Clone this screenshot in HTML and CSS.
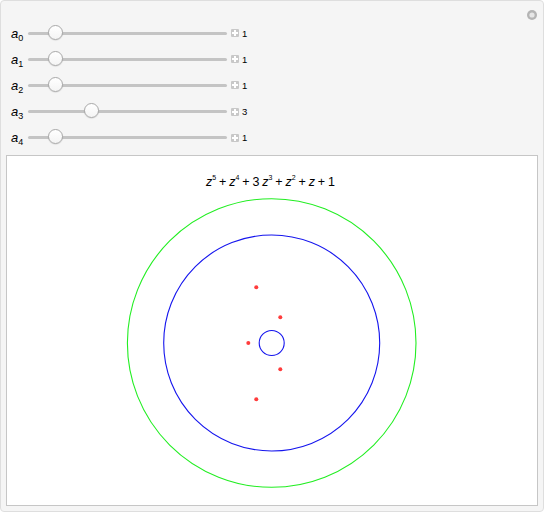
FILE: index.html
```html
<!DOCTYPE html>
<html>
<head>
<meta charset="utf-8">
<link rel="stylesheet" href="styles.css">
</head>
<body>
<div class="panel">
  <svg class="opt" width="12" height="12" viewBox="0 0 12 12">
    <circle cx="6" cy="6" r="5" fill="#b4b4b4"/>
    <circle cx="6" cy="6" r="2.6" fill="#e6e6e6"/>
  </svg>
  <div class="controls">
    <div class="row">
      <span class="lbl"><i>a</i><sub>0</sub></span>
      <div class="track"><span class="thumb" style="left:19.5px"></span></div>
      <span class="plus"></span><span class="val">1</span>
    </div>
    <div class="row">
      <span class="lbl"><i>a</i><sub>1</sub></span>
      <div class="track"><span class="thumb" style="left:19.5px"></span></div>
      <span class="plus"></span><span class="val">1</span>
    </div>
    <div class="row">
      <span class="lbl"><i>a</i><sub>2</sub></span>
      <div class="track"><span class="thumb" style="left:19.5px"></span></div>
      <span class="plus"></span><span class="val">1</span>
    </div>
    <div class="row">
      <span class="lbl"><i>a</i><sub>3</sub></span>
      <div class="track"><span class="thumb" style="left:56px"></span></div>
      <span class="plus"></span><span class="val">3</span>
    </div>
    <div class="row">
      <span class="lbl"><i>a</i><sub>4</sub></span>
      <div class="track"><span class="thumb" style="left:19.5px"></span></div>
      <span class="plus"></span><span class="val">1</span>
    </div>
  </div>
  <div class="plot">
    <div class="formula"><i>z</i><sup>5</sup> + <i>z</i><sup>4</sup> + 3 <i>z</i><sup>3</sup> + <i>z</i><sup>2</sup> + <i>z</i> + 1</div>
    <svg class="graph" width="530" height="312" viewBox="0 0 530 312">
      <circle cx="264.7" cy="151" r="144.3" fill="none" stroke="#22ee22" stroke-width="1.1"/>
      <circle cx="264.7" cy="151" r="108" fill="none" stroke="#1515ee" stroke-width="1.1"/>
      <circle cx="264.7" cy="151" r="12.5" fill="none" stroke="#1515ee" stroke-width="1.1"/>
      <g fill="#ff3c3c">
        <circle cx="249.3" cy="95.3" r="2"/>
        <circle cx="273.3" cy="125.3" r="2"/>
        <circle cx="241.3" cy="151" r="2"/>
        <circle cx="273.3" cy="177.3" r="2"/>
        <circle cx="249.3" cy="207.3" r="2"/>
      </g>
    </svg>
  </div>
</div>
</body>
</html>
```
FILE: styles.css
```css
html, body {
  margin: 0;
  padding: 0;
  background: #ffffff;
}
.panel {
  position: relative;
  box-sizing: border-box;
  width: 544px;
  height: 512px;
  background: #f5f5f5;
  border: 1px solid #dedede;
  border-radius: 4px;
  padding: 19px 5px 0 5px;
  font-family: "Liberation Sans", Arial, sans-serif;
}
.opt {
  position: absolute;
  right: 5px;
  top: 8px;
}
.controls {
  display: flex;
  flex-direction: column;
  padding-left: 5px;
}
.row {
  display: flex;
  align-items: center;
  height: 26.2px;
}
.lbl {
  width: 17px;
  font-size: 13px;
  color: #000;
  line-height: 1;
}
.lbl i {
  font-style: italic;
}
.lbl sub {
  font-size: 9px;
  vertical-align: -3px;
  line-height: 0;
}
.track {
  position: relative;
  width: 199px;
  height: 3px;
  background: #c4c4c4;
  border-radius: 2px;
}
.thumb {
  position: absolute;
  top: -7px;
  width: 15px;
  height: 15px;
  box-sizing: border-box;
  border: 1px solid #a9a9a9;
  border-radius: 50%;
  background: linear-gradient(#ffffff, #f4f4f4);
  box-shadow: 0 0.5px 1px rgba(0,0,0,0.15);
}
.plus {
  position: relative;
  width: 8px;
  height: 8px;
  margin-left: 4px;
  background: #c8c8c8;
  border-radius: 1px;
}
.plus::before, .plus::after {
  content: "";
  position: absolute;
  background: #ffffff;
}
.plus::before {
  left: 3px;
  top: 1px;
  width: 2px;
  height: 6px;
}
.plus::after {
  left: 1px;
  top: 3px;
  width: 6px;
  height: 2px;
}
.val {
  margin-left: 3px;
  font-size: 9.5px;
  color: #000;
}
.plot {
  margin-top: 4px;
  box-sizing: border-box;
  width: 532px;
  height: 351px;
  background: #ffffff;
  border: 1px solid #c6c6c6;
  display: flex;
  flex-direction: column;
}
.formula {
  padding-top: 17px;
  height: 19px;
  line-height: 19px;
  text-align: center;
  font-size: 12.5px;
  word-spacing: -0.6px;
  color: #000;
  padding-right: 3px;
}
.formula sup {
  font-size: 7px;
  vertical-align: 6px;
  line-height: 0;
}
.graph {
  display: block;
}
```
